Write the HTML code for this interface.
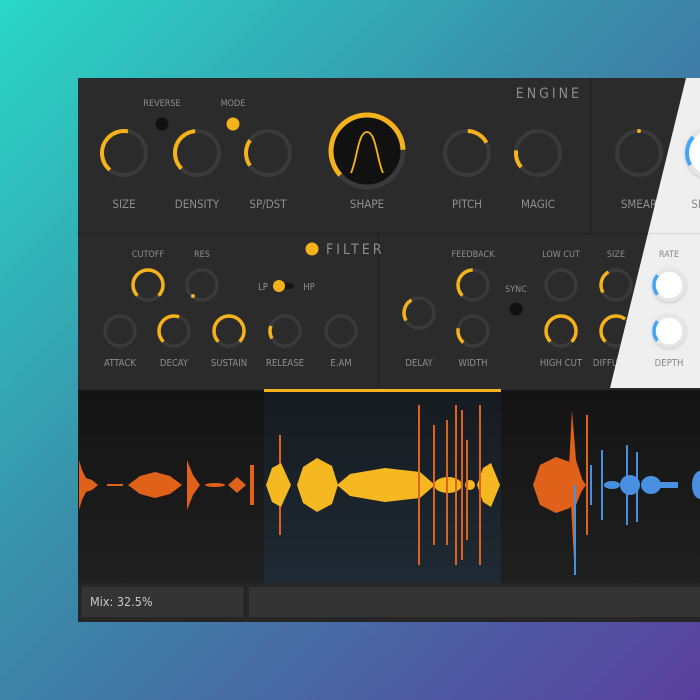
<!DOCTYPE html>
<html><head><meta charset="utf-8"><style>
html,body{margin:0;padding:0;width:700px;height:700px;overflow:hidden;background:linear-gradient(135deg,#2ad8c6 0%,#3a8aa8 45%,#5a3f9e 100%);}
svg{position:absolute;left:0;top:0}
text{font-family:"DejaVu Sans Condensed","Liberation Sans",sans-serif;}
</style></head><body>
<svg width="700" height="700" viewBox="0 0 700 700" xmlns="http://www.w3.org/2000/svg">
<defs>
<linearGradient id="wv" x1="0" y1="0" x2="0" y2="1"><stop offset="0" stop-color="#141414"/><stop offset="1" stop-color="#1f1f1f"/></linearGradient>
<linearGradient id="sel" x1="0" y1="0" x2="0" y2="1"><stop offset="0" stop-color="#161b20"/><stop offset="1" stop-color="#1e2a34"/></linearGradient>
<filter id="sh" x="-30%" y="-30%" width="160%" height="160%"><feDropShadow dx="0" dy="1" stdDeviation="1.5" flood-color="#000" flood-opacity="0.2"/></filter>
</defs>
<rect x="78" y="78" width="622" height="544" fill="#2b2b2b"/>
<line x1="78" y1="233.5" x2="700" y2="233.5" stroke="#222" stroke-width="1.5"/>
<line x1="590.5" y1="78" x2="590.5" y2="233" stroke="#222" stroke-width="1.5"/>
<line x1="378.5" y1="234" x2="378.5" y2="388" stroke="#222" stroke-width="1.5"/>

<g fill="#8e8e8e" text-anchor="middle" font-size="9">
<text x="162" y="106">REVERSE</text><text x="233" y="106">MODE</text>
<text x="148" y="257">CUTOFF</text><text x="202" y="257">RES</text>
<text x="473" y="257">FEEDBACK</text><text x="561" y="257">LOW CUT</text><text x="616" y="257">SIZE</text>
<text x="516" y="292">SYNC</text>
</g>
<g fill="#8e8e8e" text-anchor="middle" font-size="11.5">
<text x="124" y="208">SIZE</text><text x="197" y="208">DENSITY</text><text x="268" y="208">SP/DST</text>
<text x="367" y="208">SHAPE</text><text x="467" y="208">PITCH</text><text x="538" y="208">MAGIC</text><text x="639" y="208">SMEAR</text>
</g>
<g fill="#8e8e8e" text-anchor="middle" font-size="9.5">
<text x="120" y="366">ATTACK</text><text x="174" y="366">DECAY</text><text x="229" y="366">SUSTAIN</text><text x="285" y="366">RELEASE</text><text x="341" y="366">E.AM</text>
<text x="419" y="366">DELAY</text><text x="473" y="366">WIDTH</text><text x="561" y="366">HIGH CUT</text><text x="616" y="366">DIFFUSION</text>
<text x="263" y="290">LP</text><text x="309" y="290">HP</text>
</g>
<text x="582" y="98" text-anchor="end" fill="#8e8e8e" font-size="14" letter-spacing="3">ENGINE</text>
<text x="326" y="254" fill="#8e8e8e" font-size="14" letter-spacing="3">FILTER</text>
<circle cx="312" cy="249" r="6.5" fill="#f5b21b"/>
<circle cx="162" cy="124" r="6.5" fill="#111"/>
<circle cx="233" cy="124" r="6.5" fill="#f5b21b"/>
<circle cx="516" cy="309" r="6.5" fill="#111"/>
<rect x="279" y="283" width="15" height="6" rx="3" fill="#161616"/>
<circle cx="279" cy="286" r="6" fill="#f5b21b"/>

<g fill="none" stroke-width="4">
<g stroke="#3a3a3a"><circle cx="124" cy="153" r="22"/><circle cx="197" cy="153" r="22"/><circle cx="268" cy="153" r="22"/><circle cx="467" cy="153" r="22"/><circle cx="538" cy="153" r="22"/><circle cx="639" cy="153" r="22"/></g>
<g stroke="#f5b21b">
<circle cx="124" cy="153" r="22" stroke-dasharray="57.6 200" transform="rotate(130 124 153)"/>
<circle cx="197" cy="153" r="22" stroke-dasharray="49.9 200" transform="rotate(135 197 153)"/>
<circle cx="268" cy="153" r="22" stroke-dasharray="27 200" transform="rotate(145 268 153)"/>
<circle cx="467" cy="153" r="22" stroke-dasharray="23 200" transform="rotate(272 467 153)"/>
<circle cx="538" cy="153" r="22" stroke-dasharray="18 200" transform="rotate(140 538 153)"/>
</g>
<circle cx="639" cy="131" r="2" fill="#f5b21b" stroke="none"/>
<circle cx="367" cy="151" r="36" fill="#111" stroke="#3a3a3a" stroke-width="5"/>
<circle cx="367" cy="151" r="36" stroke="#f5b21b" stroke-width="5" stroke-dasharray="138 300" transform="rotate(138 367 151)"/>
<path d="M351 173 C357 160 358 132 367 132 C376 132 377 160 383 173" stroke="#f5b21b" stroke-width="1.8"/>
<g stroke="#3a3a3a" stroke-width="3.5">
<circle cx="148" cy="285" r="15"/><circle cx="202" cy="285" r="15"/>
<circle cx="120" cy="331" r="15"/><circle cx="174" cy="331" r="15"/><circle cx="229" cy="331" r="15"/><circle cx="285" cy="331" r="15"/><circle cx="341" cy="331" r="15"/>
<circle cx="419" cy="313" r="15"/><circle cx="473" cy="285" r="15"/><circle cx="473" cy="331" r="15"/>
<circle cx="561" cy="285" r="15"/><circle cx="561" cy="331" r="15"/><circle cx="616" cy="285" r="15"/><circle cx="616" cy="331" r="15"/>
</g>
<g stroke="#f5b21b" stroke-width="3.5">
<circle cx="148" cy="285" r="15" stroke-dasharray="70.6 200" transform="rotate(135 148 285)"/>
<circle cx="174" cy="331" r="15" stroke-dasharray="40.5 200" transform="rotate(135 174 331)"/>
<circle cx="229" cy="331" r="15" stroke-dasharray="70.6 200" transform="rotate(135 229 331)"/>
<circle cx="285" cy="331" r="15" stroke-dasharray="13 200" transform="rotate(150 285 331)"/>
<circle cx="419" cy="313" r="15" stroke-dasharray="23.5 200" transform="rotate(150 419 313)"/>
<circle cx="473" cy="285" r="15" stroke-dasharray="35 200" transform="rotate(135 473 285)"/>
<circle cx="473" cy="331" r="15" stroke-dasharray="15.7 200" transform="rotate(130 473 331)"/>
<circle cx="561" cy="331" r="15" stroke-dasharray="70.6 200" transform="rotate(135 561 331)"/>
<circle cx="616" cy="285" r="15" stroke-dasharray="23.5 200" transform="rotate(150 616 285)"/>
<circle cx="616" cy="331" r="15" stroke-dasharray="45 200" transform="rotate(135 616 331)"/>
</g>
<circle cx="193" cy="296" r="2" fill="#f5b21b" stroke="none"/>
</g>

<polygon points="686,78 700,78 700,388 610,388" fill="#efefef"/>
<line x1="648" y1="233.5" x2="700" y2="233.5" stroke="#dcdcdc" stroke-width="1.5"/>
<g fill="none">
<circle cx="711" cy="153" r="24" fill="#fff" stroke="#e6e6e6" stroke-width="4" filter="url(#sh)"/>
<circle cx="711" cy="153" r="24" stroke="#42a5f5" stroke-width="4" stroke-dasharray="30 300" transform="rotate(150 711 153)"/>
<circle cx="669" cy="285" r="15" fill="#fff" stroke="#e6e6e6" stroke-width="3.5" filter="url(#sh)"/>
<circle cx="669" cy="285" r="15" stroke="#42a5f5" stroke-width="3.5" stroke-dasharray="21 200" transform="rotate(140 669 285)"/>
<circle cx="669" cy="331" r="15" fill="#fff" stroke="#e6e6e6" stroke-width="3.5" filter="url(#sh)"/>
<circle cx="669" cy="331" r="15" stroke="#42a5f5" stroke-width="3.5" stroke-dasharray="21 200" transform="rotate(140 669 331)"/>
</g>
<g fill="#888" text-anchor="middle" font-size="9.5">
<text x="669" y="257" font-size="9">RATE</text><text x="669" y="366">DEPTH</text><text x="699" y="208" font-size="11.5">SM</text>
</g>

<rect x="78" y="390" width="622" height="193" fill="url(#wv)"/>
<rect x="264" y="392" width="237" height="191" fill="url(#sel)"/>
<rect x="264" y="389" width="237" height="3" fill="#f5b21b"/>
<g fill="#e0611a">
<polygon points="79,460 82,470 86,478 92,480 98,485 92,490 86,492 82,500 79,510"/>
<rect x="107" y="484" width="16" height="2"/>
<polygon points="128,485 140,476 155,472 170,476 182,485 170,494 155,498 140,494"/>
<polygon points="187,460 193,475 200,485 193,495 187,510"/>
<ellipse cx="215" cy="485" rx="10" ry="2"/>
<polygon points="228,485 237,477 246,485 237,493"/>
<rect x="250" y="465" width="4" height="40"/>
<rect x="279" y="435" width="2" height="100"/>
<polygon points="533,485 540,465 556,457 570,462 586,485 570,508 556,513 540,505"/>
<polygon points="572,410 576,460 584,485 576,505 574,560 571,505 568,485"/>
<rect x="586" y="415" width="2" height="120"/>
</g>
<g fill="#f5b820">
<polygon points="266,485 272,468 281,463 291,485 281,507 272,502"/>
<polygon points="297,485 303,467 317,458 332,466 338,485 332,504 317,512 303,503"/>
<polygon points="337,485 350,474 385,468 420,472 435,485 420,498 385,502 350,496"/>
<ellipse cx="448" cy="485" rx="14" ry="8"/>
<ellipse cx="470" cy="485" rx="5" ry="5"/>
<polygon points="477,485 483,468 491,463 500,485 491,507 483,502"/>
</g>
<g fill="#e0611a">
<rect x="418" y="405" width="2" height="160"/><rect x="433" y="425" width="2" height="120"/><rect x="446" y="420" width="2" height="125"/>
<rect x="455" y="405" width="2" height="160"/><rect x="461" y="410" width="2" height="150"/><rect x="466" y="440" width="2" height="100"/><rect x="479" y="405" width="2" height="160"/>
</g>
<g fill="#4a90e0">
<rect x="574" y="485" width="2" height="90"/>
<rect x="590" y="465" width="2" height="40"/><rect x="601" y="450" width="2" height="70"/>
<ellipse cx="612" cy="485" rx="8" ry="4"/>
<ellipse cx="630" cy="485" rx="10" ry="10"/><rect x="626" y="445" width="2" height="80"/><rect x="636" y="452" width="2" height="70"/>
<ellipse cx="651" cy="485" rx="10" ry="9"/>
<rect x="660" y="482" width="18" height="6"/>
<ellipse cx="700" cy="485" rx="8" ry="14"/>
</g>

<rect x="78" y="583" width="622" height="39" fill="#262626"/>
<rect x="82" y="587" width="161" height="30" fill="#343434"/>
<rect x="249" y="587" width="451" height="30" fill="#343434"/>
<text x="90" y="606" fill="#c8c8c8" font-size="12.5">Mix: 32.5%</text>
</svg>
</body></html>
